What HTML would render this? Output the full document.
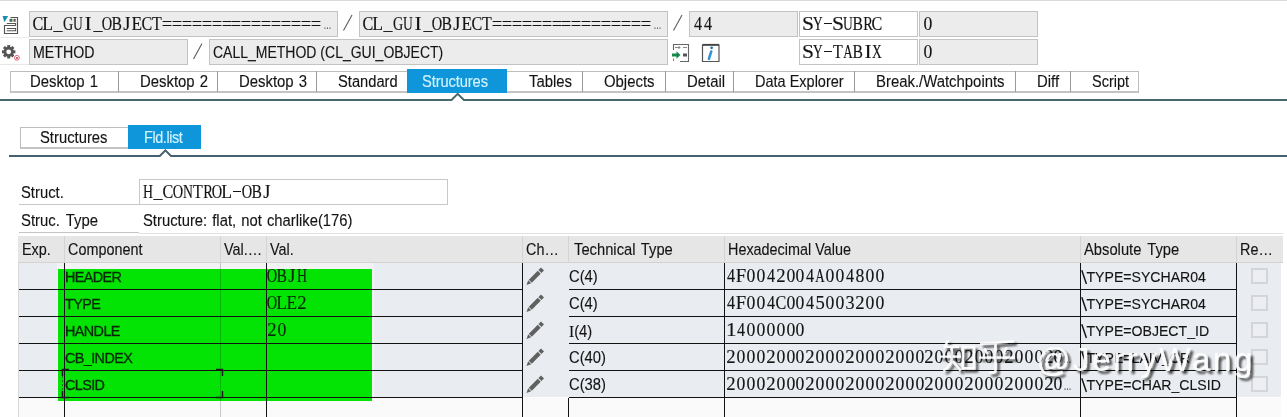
<!DOCTYPE html>
<html><head><meta charset="utf-8">
<style>
*{margin:0;padding:0;box-sizing:border-box}
html,body{width:1287px;height:417px;overflow:hidden;background:#fff}
body{position:relative;font-family:"Liberation Sans",sans-serif;color:#141414}
.a{position:absolute}
.t{position:absolute;white-space:nowrap;line-height:1;font-size:14.4px;-webkit-text-stroke:0.12px currentColor}
.m{position:absolute;white-space:nowrap;line-height:1;font-family:"Liberation Serif",serif;color:#141414;-webkit-text-stroke:0.15px currentColor}
.m i{font-style:normal;display:inline-flex;justify-content:center}
</style></head><body>
<div class="a" style="left:0px;top:0px;width:1287px;height:1px;background:#dadada"></div>
<svg class="a" style="left:0;top:0" width="24" height="66">
 <path d="M2.6 16 H8.2 L4.4 22.2 Z" fill="#1b8cb0"/>
 <path d="M10.5 17.5 H17.5 V33.5 H4.5 V25" fill="none" stroke="#555" stroke-width="1.15"/>
 <rect x="9.5" y="18.8" width="3" height="3" fill="#4b6b56"/>
 <rect x="13.5" y="18.8" width="2.2" height="3" fill="#5a5a5a"/>
 <path d="M6.8 23.5 H15.6 V25.5 H4.5 M6.8 28.5 H15.6 V30.8 H6.8" fill="none" stroke="#555" stroke-width="1.05"/>
 <g transform="translate(8.7 51.8)" fill="#555">
  <circle r="5.1"/>
  <rect x="-1.5" y="-6.7" width="3" height="13.4"/>
  <rect x="-1.5" y="-6.7" width="3" height="13.4" transform="rotate(45)"/>
  <rect x="-1.5" y="-6.7" width="3" height="13.4" transform="rotate(90)"/>
  <rect x="-1.5" y="-6.7" width="3" height="13.4" transform="rotate(135)"/>
  <circle r="2.4" fill="#fff"/>
 </g>
 <circle cx="16.9" cy="57.8" r="3.4" fill="#fff"/>
 <circle cx="16.9" cy="57.8" r="2.4" fill="#fff" stroke="#d65464" stroke-width="0.9"/>
 <circle cx="16.9" cy="58" r="1.1" fill="#c84858"/>
</svg>
<div class="a" style="left:29px;top:11px;width:309px;height:26px;background:#ececec;border:1px solid #c3c3c3"></div>
<div class="m" style="left:33px;top:14px;font-size:19.5px"><i style="width:9.93px;transform:translateX(-0.11px) scaleX(0.827)">C</i><i style="width:9.93px;transform:translateX(-0.28px) scaleX(0.904)">L</i><i style="width:9.93px;transform:translateX(-0.00px) scaleX(0.915)">_</i><i style="width:9.93px;transform:translateX(0.07px) scaleX(0.726)">G</i><i style="width:9.93px;transform:translateX(-0.00px) scaleX(0.694)">U</i><i style="width:9.93px;transform:translateX(0.01px) scaleX(1.097)">I</i><i style="width:9.93px;transform:translateX(-0.00px) scaleX(0.915)">_</i><i style="width:9.93px;transform:translateX(-0.00px) scaleX(0.737)">O</i><i style="width:9.93px;transform:translateX(-0.16px) scaleX(0.801)">B</i><i style="width:9.93px;transform:translateX(-0.00px) scaleX(0.945)">J</i><i style="width:9.93px;transform:translateX(-0.18px) scaleX(0.886)">E</i><i style="width:9.93px;transform:translateX(-0.11px) scaleX(0.827)">C</i><i style="width:9.93px;transform:translateX(0.01px) scaleX(0.819)">T</i><i style="width:9.93px;transform:translateX(0.01px) scaleX(0.948)">=</i><i style="width:9.93px;transform:translateX(0.01px) scaleX(0.948)">=</i><i style="width:9.93px;transform:translateX(0.01px) scaleX(0.948)">=</i><i style="width:9.93px;transform:translateX(0.01px) scaleX(0.948)">=</i><i style="width:9.93px;transform:translateX(0.01px) scaleX(0.948)">=</i><i style="width:9.93px;transform:translateX(0.01px) scaleX(0.948)">=</i><i style="width:9.93px;transform:translateX(0.01px) scaleX(0.948)">=</i><i style="width:9.93px;transform:translateX(0.01px) scaleX(0.948)">=</i><i style="width:9.93px;transform:translateX(0.01px) scaleX(0.948)">=</i><i style="width:9.93px;transform:translateX(0.01px) scaleX(0.948)">=</i><i style="width:9.93px;transform:translateX(0.01px) scaleX(0.948)">=</i><i style="width:9.93px;transform:translateX(0.01px) scaleX(0.948)">=</i><i style="width:9.93px;transform:translateX(0.01px) scaleX(0.948)">=</i><i style="width:9.93px;transform:translateX(0.01px) scaleX(0.948)">=</i><i style="width:9.93px;transform:translateX(0.01px) scaleX(0.948)">=</i><i style="width:9.93px;transform:translateX(0.01px) scaleX(0.948)">=</i></div>
<svg class="a" style="left:324px;top:27px" width="8" height="3"><rect x="0.5" y="0.5" width="1" height="1.3" fill="#444"/><rect x="3" y="0.5" width="1" height="1.3" fill="#444"/><rect x="5.5" y="0.5" width="1" height="1.3" fill="#444"/></svg>
<svg class="a" style="left:0;top:0" width="1287" height="70"><path d="M343.5 30.5 L352 15" stroke="#5c5c5c" stroke-width="1.1" fill="none"/></svg>
<div class="a" style="left:359px;top:11px;width:309px;height:26px;background:#ececec;border:1px solid #c3c3c3"></div>
<div class="m" style="left:363px;top:14px;font-size:19.5px"><i style="width:9.93px;transform:translateX(-0.11px) scaleX(0.827)">C</i><i style="width:9.93px;transform:translateX(-0.28px) scaleX(0.904)">L</i><i style="width:9.93px;transform:translateX(-0.00px) scaleX(0.915)">_</i><i style="width:9.93px;transform:translateX(0.07px) scaleX(0.726)">G</i><i style="width:9.93px;transform:translateX(-0.00px) scaleX(0.694)">U</i><i style="width:9.93px;transform:translateX(0.01px) scaleX(1.097)">I</i><i style="width:9.93px;transform:translateX(-0.00px) scaleX(0.915)">_</i><i style="width:9.93px;transform:translateX(-0.00px) scaleX(0.737)">O</i><i style="width:9.93px;transform:translateX(-0.16px) scaleX(0.801)">B</i><i style="width:9.93px;transform:translateX(-0.00px) scaleX(0.945)">J</i><i style="width:9.93px;transform:translateX(-0.18px) scaleX(0.886)">E</i><i style="width:9.93px;transform:translateX(-0.11px) scaleX(0.827)">C</i><i style="width:9.93px;transform:translateX(0.01px) scaleX(0.819)">T</i><i style="width:9.93px;transform:translateX(0.01px) scaleX(0.948)">=</i><i style="width:9.93px;transform:translateX(0.01px) scaleX(0.948)">=</i><i style="width:9.93px;transform:translateX(0.01px) scaleX(0.948)">=</i><i style="width:9.93px;transform:translateX(0.01px) scaleX(0.948)">=</i><i style="width:9.93px;transform:translateX(0.01px) scaleX(0.948)">=</i><i style="width:9.93px;transform:translateX(0.01px) scaleX(0.948)">=</i><i style="width:9.93px;transform:translateX(0.01px) scaleX(0.948)">=</i><i style="width:9.93px;transform:translateX(0.01px) scaleX(0.948)">=</i><i style="width:9.93px;transform:translateX(0.01px) scaleX(0.948)">=</i><i style="width:9.93px;transform:translateX(0.01px) scaleX(0.948)">=</i><i style="width:9.93px;transform:translateX(0.01px) scaleX(0.948)">=</i><i style="width:9.93px;transform:translateX(0.01px) scaleX(0.948)">=</i><i style="width:9.93px;transform:translateX(0.01px) scaleX(0.948)">=</i><i style="width:9.93px;transform:translateX(0.01px) scaleX(0.948)">=</i><i style="width:9.93px;transform:translateX(0.01px) scaleX(0.948)">=</i><i style="width:9.93px;transform:translateX(0.01px) scaleX(0.948)">=</i></div>
<svg class="a" style="left:654px;top:27px" width="8" height="3"><rect x="0.5" y="0.5" width="1" height="1.3" fill="#444"/><rect x="3" y="0.5" width="1" height="1.3" fill="#444"/><rect x="5.5" y="0.5" width="1" height="1.3" fill="#444"/></svg>
<svg class="a" style="left:0;top:0" width="1287" height="70"><path d="M673.5 30.5 L682 15" stroke="#5c5c5c" stroke-width="1.1" fill="none"/></svg>
<div class="a" style="left:689px;top:11px;width:109px;height:26px;background:#ececec;border:1px solid #c3c3c3"></div>
<div class="m" style="left:693px;top:14px;font-size:19.5px"><i style="width:9.93px;transform:translateX(0.03px) scaleX(0.827)">4</i><i style="width:9.93px;transform:translateX(0.03px) scaleX(0.827)">4</i></div>
<div class="a" style="left:799px;top:11px;width:119px;height:26px;background:#fff;border:1px solid #c3c3c3"></div>
<div class="m" style="left:803px;top:14px;font-size:19.5px"><i style="width:9.93px;transform:translateX(0.05px) scaleX(1.104)">S</i><i style="width:9.93px;transform:translateX(-0.10px) scaleX(0.688)">Y</i><i style="width:9.93px"> </i><b style="position:absolute;left:20.86px;top:8.80px;width:7.9px;height:1.15px;background:currentColor"></b><i style="width:9.93px;transform:translateX(0.05px) scaleX(1.104)">S</i><i style="width:9.93px;transform:translateX(-0.00px) scaleX(0.694)">U</i><i style="width:9.93px;transform:translateX(-0.16px) scaleX(0.801)">B</i><i style="width:9.93px;transform:translateX(0.20px) scaleX(0.741)">R</i><i style="width:9.93px;transform:translateX(-0.11px) scaleX(0.827)">C</i></div>
<div class="a" style="left:919px;top:11px;width:119px;height:26px;background:#ececec;border:1px solid #c3c3c3"></div>
<div class="m" style="left:923px;top:14px;font-size:19.5px"><i style="width:9.93px;transform:translateX(-0.00px) scaleX(0.907)">0</i></div>
<div class="a" style="left:0px;top:37px;width:29px;height:1px;background:#ececec"></div>
<div class="a" style="left:0px;top:64px;width:29px;height:1px;background:#e8e8e8"></div>
<div class="a" style="left:29px;top:39px;width:159px;height:26px;background:#ececec;border:1px solid #c3c3c3"></div>
<div class="t" style="left:33px;top:46px;font-size:14.2px;transform:scaleY(1.13);transform-origin:0 12.10px">METHOD</div>
<svg class="a" style="left:0;top:0" width="1287" height="70"><path d="M193.5 59 L202 43.5" stroke="#5c5c5c" stroke-width="1.1" fill="none"/></svg>
<div class="a" style="left:209px;top:39px;width:459px;height:26px;background:#ececec;border:1px solid #c3c3c3"></div>
<div class="t" style="left:213px;top:46px;font-size:14.0px;transform:scaleY(1.15);transform-origin:0 12.00px">CALL_METHOD (CL_GUI_OBJECT)</div>
<svg class="a" style="left:671px;top:43px" width="20" height="20" viewBox="0 0 20 20">
 <path d="M2.5 7 V1.5 H17.5 V18.5 H9" fill="none" stroke="#666" stroke-width="1.1"/>
 <path d="M4 4.5 H9 M7.5 3 L9 4.5 L7.5 6 M12 4.5 H16" fill="none" stroke="#888" stroke-width="1"/>
 <path d="M1 10.6 H5.5 V8.3 L9.5 12 L5.5 15.7 V13.4 H1 Z" fill="#17884a"/>
 <rect x="12" y="10.5" width="4" height="3" fill="#555"/>
 <path d="M2.5 15.5 V18" stroke="#c06080" stroke-width="1"/>
</svg>
<svg class="a" style="left:701px;top:43px" width="20" height="20" viewBox="0 0 20 20">
 <path d="M1.5 2 H18 V18.5 H1.5 Z" fill="#fff" stroke="#555" stroke-width="1.2"/>
 <path d="M1.5 1.8 H18" stroke="#444" stroke-width="1.8"/>
 <circle cx="10.6" cy="4.8" r="1.4" fill="#2a6fa0"/>
 <path d="M10.2 8.6 L7.9 15.8" stroke="#3394d4" stroke-width="2.6" stroke-linecap="round"/>
</svg>
<div class="a" style="left:799px;top:39px;width:119px;height:26px;background:#fff;border:1px solid #c3c3c3"></div>
<div class="m" style="left:803px;top:42px;font-size:19.5px"><i style="width:9.93px;transform:translateX(0.05px) scaleX(1.104)">S</i><i style="width:9.93px;transform:translateX(-0.10px) scaleX(0.688)">Y</i><i style="width:9.93px"> </i><b style="position:absolute;left:20.86px;top:8.80px;width:7.9px;height:1.15px;background:currentColor"></b><i style="width:9.93px;transform:translateX(0.01px) scaleX(0.819)">T</i><i style="width:9.93px;transform:translateX(0.02px) scaleX(0.669)">A</i><i style="width:9.93px;transform:translateX(-0.16px) scaleX(0.801)">B</i><i style="width:9.93px;transform:translateX(0.01px) scaleX(1.097)">I</i><i style="width:9.93px;transform:translateX(0.03px) scaleX(0.692)">X</i></div>
<div class="a" style="left:919px;top:39px;width:119px;height:26px;background:#ececec;border:1px solid #c3c3c3"></div>
<div class="m" style="left:923px;top:42px;font-size:19.5px"><i style="width:9.93px;transform:translateX(-0.00px) scaleX(0.907)">0</i></div>
<div class="a" style="left:10px;top:71px;width:1129px;height:1px;background:#bdbdbd"></div>
<div class="a" style="left:10px;top:91px;width:1129px;height:2px;background:#c4c4c4"></div>
<div class="a" style="left:10px;top:71px;width:1px;height:22px;background:#bdbdbd"></div>
<div class="a" style="left:1138px;top:71px;width:1px;height:22px;background:#bdbdbd"></div>
<div class="a" style="left:118px;top:71px;width:1px;height:21px;background:#9a9a9a"></div>
<div class="a" style="left:217px;top:71px;width:1px;height:21px;background:#9a9a9a"></div>
<div class="a" style="left:316px;top:71px;width:1px;height:21px;background:#9a9a9a"></div>
<div class="a" style="left:582px;top:71px;width:1px;height:21px;background:#9a9a9a"></div>
<div class="a" style="left:665px;top:71px;width:1px;height:21px;background:#9a9a9a"></div>
<div class="a" style="left:733px;top:71px;width:1px;height:21px;background:#9a9a9a"></div>
<div class="a" style="left:854px;top:71px;width:1px;height:21px;background:#9a9a9a"></div>
<div class="a" style="left:1015px;top:71px;width:1px;height:21px;background:#9a9a9a"></div>
<div class="a" style="left:1070px;top:71px;width:1px;height:21px;background:#9a9a9a"></div>
<div class="a" style="left:407px;top:69px;width:100px;height:24px;background:#0f96da"></div>
<div class="t" style="left:30px;top:75px;font-size:14.9px;transform:scaleY(1.05);transform-origin:0 12.45px;word-spacing:1px">Desktop 1</div>
<div class="t" style="left:140px;top:75px;font-size:14.9px;transform:scaleY(1.05);transform-origin:0 12.45px;word-spacing:1px">Desktop 2</div>
<div class="t" style="left:239px;top:75px;font-size:14.9px;transform:scaleY(1.05);transform-origin:0 12.45px;word-spacing:1px">Desktop 3</div>
<div class="t" style="left:529px;top:75px;font-size:14.9px;transform:scaleY(1.05);transform-origin:0 12.45px;word-spacing:1px">Tables</div>
<div class="t" style="left:604px;top:75px;font-size:14.9px;transform:scaleY(1.05);transform-origin:0 12.45px;word-spacing:1px">Objects</div>
<div class="t" style="left:687px;top:75px;font-size:14.9px;transform:scaleY(1.05);transform-origin:0 12.45px;word-spacing:1px">Detail</div>
<div class="t" style="left:876px;top:75px;font-size:14.9px;transform:scaleY(1.05);transform-origin:0 12.45px;word-spacing:1px">Break./Watchpoints</div>
<div class="t" style="left:1037px;top:75px;font-size:14.9px;transform:scaleY(1.05);transform-origin:0 12.45px;word-spacing:1px">Diff</div>
<div class="t" style="left:755px;top:75px;font-size:14.5px;transform:scaleY(1.08);transform-origin:0 12.25px">Data Explorer</div>
<div class="t" style="left:338px;top:75px;font-size:14.7px;transform:scaleY(1.06);transform-origin:0 12.35px">Standard</div>
<div class="t" style="left:1092px;top:75px;font-size:14.5px;transform:scaleY(1.08);transform-origin:0 12.25px">Script</div>
<div class="t" style="left:422px;top:75px;font-size:14.7px;color:#d2f4ff;letter-spacing:-0.1px;transform:scaleY(1.07);transform-origin:0 12.35px">Structures</div>
<svg class="a" style="left:0;top:90px" width="1287" height="12"><path d="M0 10 H451.5 L457.7 3.8 L463.9 10 H1287" fill="none" stroke="#486870" stroke-width="2"/></svg>
<div class="a" style="left:20px;top:127px;width:109px;height:1px;background:#bdbdbd"></div>
<div class="a" style="left:20px;top:147px;width:109px;height:2px;background:#c4c4c4"></div>
<div class="a" style="left:20px;top:127px;width:1px;height:22px;background:#bdbdbd"></div>
<div class="a" style="left:128px;top:125px;width:73px;height:24px;background:#0f96da"></div>
<div class="t" style="left:40px;top:131px;font-size:14.8px;transform:scaleY(1.06);transform-origin:0 12.40px">Structures</div>
<div class="t" style="left:144px;top:131px;font-size:14.4px;color:#d2f4ff;letter-spacing:-0.4px;transform:scaleY(1.09);transform-origin:0 12.20px">Fld.list</div>
<svg class="a" style="left:0;top:145px" width="1287" height="14"><path d="M9 11 H159.8 L165.4 5.4 L171 11 H1287" fill="none" stroke="#45606e" stroke-width="2"/></svg>
<div class="t" style="left:21px;top:186px;font-size:14.8px;transform:scaleY(1.06);transform-origin:0 12.40px">Struct.</div>
<div class="a" style="left:19px;top:204px;width:120px;height:1px;background:#c8c8c8"></div>
<div class="a" style="left:139px;top:179px;width:309px;height:26px;background:#fff;border:1px solid #c8c8c8"></div>
<div class="m" style="left:143px;top:182px;font-size:19.5px"><i style="width:9.93px;transform:translateX(-0.00px) scaleX(0.710)">H</i><i style="width:9.93px;transform:translateX(-0.00px) scaleX(0.915)">_</i><i style="width:9.93px;transform:translateX(-0.11px) scaleX(0.827)">C</i><i style="width:9.93px;transform:translateX(-0.00px) scaleX(0.737)">O</i><i style="width:9.93px;transform:translateX(0.04px) scaleX(0.704)">N</i><i style="width:9.93px;transform:translateX(0.01px) scaleX(0.819)">T</i><i style="width:9.93px;transform:translateX(0.20px) scaleX(0.741)">R</i><i style="width:9.93px;transform:translateX(-0.00px) scaleX(0.737)">O</i><i style="width:9.93px;transform:translateX(-0.28px) scaleX(0.904)">L</i><i style="width:9.93px"> </i><b style="position:absolute;left:90.37px;top:8.80px;width:7.9px;height:1.15px;background:currentColor"></b><i style="width:9.93px;transform:translateX(-0.00px) scaleX(0.737)">O</i><i style="width:9.93px;transform:translateX(-0.16px) scaleX(0.801)">B</i><i style="width:9.93px;transform:translateX(-0.00px) scaleX(0.945)">J</i></div>
<div class="t" style="left:21px;top:214px;font-size:14.9px;transform:scaleY(1.05);transform-origin:0 12.45px;word-spacing:2px">Struc. Type</div>
<div class="t" style="left:143px;top:214px;font-size:14.8px;transform:scaleY(1.06);transform-origin:0 12.40px;word-spacing:1px">Structure: flat, not charlike(176)</div>
<div class="a" style="left:19px;top:232px;width:120px;height:1px;background:#c4c4c4"></div>
<div class="a" style="left:139px;top:233px;width:1144px;height:1px;background:#e2e2e2"></div>
<div class="a" style="left:18px;top:236px;width:1265px;height:26px;background:#e6e6e6"></div>
<div class="a" style="left:18px;top:262px;width:1265px;height:1px;background:#d2d2d2"></div>
<div class="a" style="left:64px;top:236px;width:1px;height:26px;background:#d4d4d4"></div>
<div class="a" style="left:220px;top:236px;width:1px;height:26px;background:#d4d4d4"></div>
<div class="a" style="left:266px;top:236px;width:1px;height:26px;background:#d4d4d4"></div>
<div class="a" style="left:522px;top:236px;width:1px;height:26px;background:#d4d4d4"></div>
<div class="a" style="left:568px;top:236px;width:1px;height:26px;background:#d4d4d4"></div>
<div class="a" style="left:724px;top:236px;width:1px;height:26px;background:#d4d4d4"></div>
<div class="a" style="left:1080px;top:236px;width:1px;height:26px;background:#d4d4d4"></div>
<div class="a" style="left:1236px;top:236px;width:1px;height:26px;background:#d4d4d4"></div>
<div class="t" style="left:22px;top:243px;font-size:14.4px;transform:scaleY(1.09);transform-origin:0 12.20px;word-spacing:0px">Exp.</div>
<div class="t" style="left:68px;top:243px;font-size:14.4px;transform:scaleY(1.09);transform-origin:0 12.20px;word-spacing:0px">Component</div>
<div class="t" style="left:224px;top:243px;font-size:14.4px;transform:scaleY(1.09);transform-origin:0 12.20px;word-spacing:0px">Val.…</div>
<div class="t" style="left:270px;top:243px;font-size:14.4px;transform:scaleY(1.09);transform-origin:0 12.20px;word-spacing:0px">Val.</div>
<div class="t" style="left:526px;top:243px;font-size:14.4px;transform:scaleY(1.09);transform-origin:0 12.20px;word-spacing:0px">Ch…</div>
<div class="t" style="left:574px;top:243px;font-size:14.75px;transform:scaleY(1.0641355932203391);transform-origin:0 12.38px;word-spacing:1.5px">Technical Type</div>
<div class="t" style="left:728px;top:243px;font-size:14.4px;transform:scaleY(1.09);transform-origin:0 12.20px;word-spacing:0px">Hexadecimal Value</div>
<div class="t" style="left:1084px;top:243px;font-size:14.75px;transform:scaleY(1.0641355932203391);transform-origin:0 12.38px;word-spacing:2px">Absolute Type</div>
<div class="t" style="left:1240px;top:243px;font-size:14.4px;transform:scaleY(1.09);transform-origin:0 12.20px;word-spacing:0px">Re…</div>
<div class="a" style="left:18px;top:263px;width:1263px;height:134px;background:#e9ecf0"></div>
<div class="a" style="left:18px;top:398px;width:1263px;height:19px;background:#fafafa"></div>
<div class="a" style="left:57px;top:263px;width:317px;height:138px;background:#f3f2f5"></div>
<div class="a" style="left:58px;top:269px;width:314px;height:132px;background:#04e404"></div>
<div class="a" style="left:18px;top:262px;width:1px;height:155px;background:#d8d8d8"></div>
<div class="a" style="left:19px;top:289px;width:504px;height:1px;background:#121212"></div>
<div class="a" style="left:569px;top:289px;width:668px;height:1px;background:#121212"></div>
<div class="a" style="left:19px;top:316px;width:504px;height:1px;background:#121212"></div>
<div class="a" style="left:569px;top:316px;width:668px;height:1px;background:#121212"></div>
<div class="a" style="left:19px;top:343px;width:504px;height:1px;background:#121212"></div>
<div class="a" style="left:569px;top:343px;width:668px;height:1px;background:#121212"></div>
<div class="a" style="left:19px;top:370px;width:504px;height:1px;background:#121212"></div>
<div class="a" style="left:569px;top:370px;width:668px;height:1px;background:#121212"></div>
<div class="a" style="left:19px;top:397px;width:504px;height:1px;background:#121212"></div>
<div class="a" style="left:569px;top:397px;width:668px;height:1px;background:#121212"></div>
<div class="a" style="left:64px;top:263px;width:1px;height:154px;background:#121212"></div>
<div class="a" style="left:266px;top:263px;width:1px;height:154px;background:#121212"></div>
<div class="a" style="left:522px;top:263px;width:1px;height:154px;background:#121212"></div>
<div class="a" style="left:724px;top:263px;width:1px;height:154px;background:#121212"></div>
<div class="a" style="left:1080px;top:263px;width:1px;height:154px;background:#121212"></div>
<div class="a" style="left:1236px;top:263px;width:1px;height:154px;background:#121212"></div>
<div class="a" style="left:220px;top:263px;width:1px;height:154px;background:#cdcdcd;mix-blend-mode:multiply"></div>
<div class="a" style="left:568px;top:398px;width:1px;height:19px;background:#121212"></div>
<div class="t" style="left:65px;top:270px;font-size:14.4px;color:#062806;letter-spacing:-0.6px;transform:scaleY(1.02);transform-origin:0 12.20px;-webkit-text-stroke:0.3px currentColor">HEADER</div>
<div class="m" style="left:267px;top:266px;font-size:19.5px;color:#062806"><i style="width:9.93px;transform:translateX(-0.00px) scaleX(0.737)">O</i><i style="width:9.93px;transform:translateX(-0.16px) scaleX(0.801)">B</i><i style="width:9.93px;transform:translateX(-0.00px) scaleX(0.945)">J</i><i style="width:9.93px;transform:translateX(-0.00px) scaleX(0.710)">H</i></div>
<div class="t" style="left:569px;top:270px;font-size:14.8px;transform:scaleY(1.07);transform-origin:0 12.40px">C(4)</div>
<div class="m" style="left:726px;top:266px;font-size:19.5px"><i style="width:9.93px;transform:translateX(0.03px) scaleX(0.827)">4</i><i style="width:9.93px;transform:translateX(-0.07px) scaleX(0.960)">F</i><i style="width:9.93px;transform:translateX(-0.00px) scaleX(0.907)">0</i><i style="width:9.93px;transform:translateX(-0.00px) scaleX(0.907)">0</i><i style="width:9.93px;transform:translateX(0.03px) scaleX(0.827)">4</i><i style="width:9.93px;transform:translateX(-0.11px) scaleX(0.959)">2</i><i style="width:9.93px;transform:translateX(-0.00px) scaleX(0.907)">0</i><i style="width:9.93px;transform:translateX(-0.00px) scaleX(0.907)">0</i><i style="width:9.93px;transform:translateX(0.03px) scaleX(0.827)">4</i><i style="width:9.93px;transform:translateX(0.02px) scaleX(0.669)">A</i><i style="width:9.93px;transform:translateX(-0.00px) scaleX(0.907)">0</i><i style="width:9.93px;transform:translateX(-0.00px) scaleX(0.907)">0</i><i style="width:9.93px;transform:translateX(0.03px) scaleX(0.827)">4</i><i style="width:9.93px;transform:translateX(-0.00px) scaleX(0.907)">8</i><i style="width:9.93px;transform:translateX(-0.00px) scaleX(0.907)">0</i><i style="width:9.93px;transform:translateX(-0.00px) scaleX(0.907)">0</i></div>
<div class="t" style="left:1086.5px;top:270px;font-size:14.1px;transform:scaleY(1.1);transform-origin:0 12.05px">TYPE=SYCHAR04</div>
<svg class="a" style="left:1078px;top:268px" width="12" height="18"><path d="M3.8 2.2 L8.4 16" stroke="#141414" stroke-width="1.45"/></svg>
<svg class="a" style="left:520px;top:263.40px" width="30" height="28" viewBox="0 0 30 28"><g transform="translate(14.5 14) rotate(45)" fill="#606060"><rect x="-2.1" y="-11.3" width="4.2" height="3.6"/><rect x="-2.1" y="-6.7" width="4.2" height="12.6"/><path d="M-2.1 6.8 H2.1 L0 11.3 Z"/></g></svg>
<div class="a" style="left:1251px;top:268px;width:17px;height:16px;border:2px solid #d3d5d8;background:#eceef1"></div>
<div class="t" style="left:65px;top:297px;font-size:14.4px;color:#062806;letter-spacing:-0.6px;transform:scaleY(1.02);transform-origin:0 12.20px;-webkit-text-stroke:0.3px currentColor">TYPE</div>
<div class="m" style="left:267px;top:293px;font-size:19.5px;color:#062806"><i style="width:9.93px;transform:translateX(-0.00px) scaleX(0.737)">O</i><i style="width:9.93px;transform:translateX(-0.28px) scaleX(0.904)">L</i><i style="width:9.93px;transform:translateX(-0.18px) scaleX(0.886)">E</i><i style="width:9.93px;transform:translateX(-0.11px) scaleX(0.959)">2</i></div>
<div class="t" style="left:569px;top:297px;font-size:14.8px;transform:scaleY(1.07);transform-origin:0 12.40px">C(4)</div>
<div class="m" style="left:726px;top:293px;font-size:19.5px"><i style="width:9.93px;transform:translateX(0.03px) scaleX(0.827)">4</i><i style="width:9.93px;transform:translateX(-0.07px) scaleX(0.960)">F</i><i style="width:9.93px;transform:translateX(-0.00px) scaleX(0.907)">0</i><i style="width:9.93px;transform:translateX(-0.00px) scaleX(0.907)">0</i><i style="width:9.93px;transform:translateX(0.03px) scaleX(0.827)">4</i><i style="width:9.93px;transform:translateX(-0.11px) scaleX(0.827)">C</i><i style="width:9.93px;transform:translateX(-0.00px) scaleX(0.907)">0</i><i style="width:9.93px;transform:translateX(-0.00px) scaleX(0.907)">0</i><i style="width:9.93px;transform:translateX(0.03px) scaleX(0.827)">4</i><i style="width:9.93px;transform:translateX(0.18px) scaleX(0.955)">5</i><i style="width:9.93px;transform:translateX(-0.00px) scaleX(0.907)">0</i><i style="width:9.93px;transform:translateX(-0.00px) scaleX(0.907)">0</i><i style="width:9.93px;transform:translateX(0.08px) scaleX(0.931)">3</i><i style="width:9.93px;transform:translateX(-0.11px) scaleX(0.959)">2</i><i style="width:9.93px;transform:translateX(-0.00px) scaleX(0.907)">0</i><i style="width:9.93px;transform:translateX(-0.00px) scaleX(0.907)">0</i></div>
<div class="t" style="left:1086.5px;top:297px;font-size:14.1px;transform:scaleY(1.1);transform-origin:0 12.05px">TYPE=SYCHAR04</div>
<svg class="a" style="left:1078px;top:295px" width="12" height="18"><path d="M3.8 2.2 L8.4 16" stroke="#141414" stroke-width="1.45"/></svg>
<svg class="a" style="left:520px;top:290.40px" width="30" height="28" viewBox="0 0 30 28"><g transform="translate(14.5 14) rotate(45)" fill="#606060"><rect x="-2.1" y="-11.3" width="4.2" height="3.6"/><rect x="-2.1" y="-6.7" width="4.2" height="12.6"/><path d="M-2.1 6.8 H2.1 L0 11.3 Z"/></g></svg>
<div class="a" style="left:1251px;top:295px;width:17px;height:16px;border:2px solid #d3d5d8;background:#eceef1"></div>
<div class="t" style="left:65px;top:324px;font-size:14.4px;color:#062806;letter-spacing:-0.6px;transform:scaleY(1.02);transform-origin:0 12.20px;-webkit-text-stroke:0.3px currentColor">HANDLE</div>
<div class="m" style="left:267px;top:320px;font-size:19.5px;color:#062806"><i style="width:9.93px;transform:translateX(-0.11px) scaleX(0.959)">2</i><i style="width:9.93px;transform:translateX(-0.00px) scaleX(0.907)">0</i></div>
<div class="t" style="left:569px;top:324px;font-size:14.8px;transform:scaleY(1.07);transform-origin:0 12.40px"><span style="font-family:Liberation Serif;font-size:15.5px">I</span>(4)</div>
<div class="m" style="left:726px;top:320px;font-size:19.5px"><i style="width:9.93px;transform:translateX(0.30px) scaleX(1.092)">1</i><i style="width:9.93px;transform:translateX(0.03px) scaleX(0.827)">4</i><i style="width:9.93px;transform:translateX(-0.00px) scaleX(0.907)">0</i><i style="width:9.93px;transform:translateX(-0.00px) scaleX(0.907)">0</i><i style="width:9.93px;transform:translateX(-0.00px) scaleX(0.907)">0</i><i style="width:9.93px;transform:translateX(-0.00px) scaleX(0.907)">0</i><i style="width:9.93px;transform:translateX(-0.00px) scaleX(0.907)">0</i><i style="width:9.93px;transform:translateX(-0.00px) scaleX(0.907)">0</i></div>
<div class="t" style="left:1086.5px;top:324px;font-size:14.1px;transform:scaleY(1.1);transform-origin:0 12.05px">TYPE=OBJECT_ID</div>
<svg class="a" style="left:1078px;top:322px" width="12" height="18"><path d="M3.8 2.2 L8.4 16" stroke="#141414" stroke-width="1.45"/></svg>
<svg class="a" style="left:520px;top:317.40px" width="30" height="28" viewBox="0 0 30 28"><g transform="translate(14.5 14) rotate(45)" fill="#606060"><rect x="-2.1" y="-11.3" width="4.2" height="3.6"/><rect x="-2.1" y="-6.7" width="4.2" height="12.6"/><path d="M-2.1 6.8 H2.1 L0 11.3 Z"/></g></svg>
<div class="a" style="left:1251px;top:322px;width:17px;height:16px;border:2px solid #d3d5d8;background:#eceef1"></div>
<div class="t" style="left:65px;top:351px;font-size:14.4px;color:#062806;letter-spacing:-0.6px;transform:scaleY(1.02);transform-origin:0 12.20px;-webkit-text-stroke:0.3px currentColor">CB_INDEX</div>
<div class="t" style="left:569px;top:351px;font-size:14.8px;transform:scaleY(1.07);transform-origin:0 12.40px">C(40)</div>
<div class="m" style="left:726px;top:347px;font-size:19.5px"><i style="width:9.93px;transform:translateX(-0.11px) scaleX(0.959)">2</i><i style="width:9.93px;transform:translateX(-0.00px) scaleX(0.907)">0</i><i style="width:9.93px;transform:translateX(-0.00px) scaleX(0.907)">0</i><i style="width:9.93px;transform:translateX(-0.00px) scaleX(0.907)">0</i><i style="width:9.93px;transform:translateX(-0.11px) scaleX(0.959)">2</i><i style="width:9.93px;transform:translateX(-0.00px) scaleX(0.907)">0</i><i style="width:9.93px;transform:translateX(-0.00px) scaleX(0.907)">0</i><i style="width:9.93px;transform:translateX(-0.00px) scaleX(0.907)">0</i><i style="width:9.93px;transform:translateX(-0.11px) scaleX(0.959)">2</i><i style="width:9.93px;transform:translateX(-0.00px) scaleX(0.907)">0</i><i style="width:9.93px;transform:translateX(-0.00px) scaleX(0.907)">0</i><i style="width:9.93px;transform:translateX(-0.00px) scaleX(0.907)">0</i><i style="width:9.93px;transform:translateX(-0.11px) scaleX(0.959)">2</i><i style="width:9.93px;transform:translateX(-0.00px) scaleX(0.907)">0</i><i style="width:9.93px;transform:translateX(-0.00px) scaleX(0.907)">0</i><i style="width:9.93px;transform:translateX(-0.00px) scaleX(0.907)">0</i><i style="width:9.93px;transform:translateX(-0.11px) scaleX(0.959)">2</i><i style="width:9.93px;transform:translateX(-0.00px) scaleX(0.907)">0</i><i style="width:9.93px;transform:translateX(-0.00px) scaleX(0.907)">0</i><i style="width:9.93px;transform:translateX(-0.00px) scaleX(0.907)">0</i><i style="width:9.93px;transform:translateX(-0.11px) scaleX(0.959)">2</i><i style="width:9.93px;transform:translateX(-0.00px) scaleX(0.907)">0</i><i style="width:9.93px;transform:translateX(-0.00px) scaleX(0.907)">0</i><i style="width:9.93px;transform:translateX(-0.00px) scaleX(0.907)">0</i><i style="width:9.93px;transform:translateX(-0.11px) scaleX(0.959)">2</i><i style="width:9.93px;transform:translateX(-0.00px) scaleX(0.907)">0</i><i style="width:9.93px;transform:translateX(-0.00px) scaleX(0.907)">0</i><i style="width:9.93px;transform:translateX(-0.00px) scaleX(0.907)">0</i><i style="width:9.93px;transform:translateX(-0.11px) scaleX(0.959)">2</i><i style="width:9.93px;transform:translateX(-0.00px) scaleX(0.907)">0</i><i style="width:9.93px;transform:translateX(-0.00px) scaleX(0.907)">0</i><i style="width:9.93px;transform:translateX(-0.00px) scaleX(0.907)">0</i><i style="width:9.93px;transform:translateX(-0.11px) scaleX(0.959)">2</i><i style="width:9.93px;transform:translateX(-0.00px) scaleX(0.907)">0</i></div>
<svg class="a" style="left:1064px;top:361px" width="8" height="3"><rect x="0.5" y="0.5" width="1" height="1.3" fill="#333"/><rect x="3" y="0.5" width="1" height="1.3" fill="#333"/><rect x="5.5" y="0.5" width="1" height="1.3" fill="#333"/></svg>
<div class="t" style="left:1086.5px;top:351px;font-size:14.1px;transform:scaleY(1.1);transform-origin:0 12.05px">TYPE=LAIV_CR</div>
<svg class="a" style="left:1078px;top:349px" width="12" height="18"><path d="M3.8 2.2 L8.4 16" stroke="#141414" stroke-width="1.45"/></svg>
<svg class="a" style="left:520px;top:344.40px" width="30" height="28" viewBox="0 0 30 28"><g transform="translate(14.5 14) rotate(45)" fill="#606060"><rect x="-2.1" y="-11.3" width="4.2" height="3.6"/><rect x="-2.1" y="-6.7" width="4.2" height="12.6"/><path d="M-2.1 6.8 H2.1 L0 11.3 Z"/></g></svg>
<div class="a" style="left:1251px;top:349px;width:17px;height:16px;border:2px solid #d3d5d8;background:#eceef1"></div>
<div class="t" style="left:65px;top:378px;font-size:14.4px;color:#062806;letter-spacing:-0.6px;transform:scaleY(1.02);transform-origin:0 12.20px;-webkit-text-stroke:0.3px currentColor">CLSID</div>
<div class="t" style="left:569px;top:378px;font-size:14.8px;transform:scaleY(1.07);transform-origin:0 12.40px">C(38)</div>
<div class="m" style="left:726px;top:374px;font-size:19.5px"><i style="width:9.93px;transform:translateX(-0.11px) scaleX(0.959)">2</i><i style="width:9.93px;transform:translateX(-0.00px) scaleX(0.907)">0</i><i style="width:9.93px;transform:translateX(-0.00px) scaleX(0.907)">0</i><i style="width:9.93px;transform:translateX(-0.00px) scaleX(0.907)">0</i><i style="width:9.93px;transform:translateX(-0.11px) scaleX(0.959)">2</i><i style="width:9.93px;transform:translateX(-0.00px) scaleX(0.907)">0</i><i style="width:9.93px;transform:translateX(-0.00px) scaleX(0.907)">0</i><i style="width:9.93px;transform:translateX(-0.00px) scaleX(0.907)">0</i><i style="width:9.93px;transform:translateX(-0.11px) scaleX(0.959)">2</i><i style="width:9.93px;transform:translateX(-0.00px) scaleX(0.907)">0</i><i style="width:9.93px;transform:translateX(-0.00px) scaleX(0.907)">0</i><i style="width:9.93px;transform:translateX(-0.00px) scaleX(0.907)">0</i><i style="width:9.93px;transform:translateX(-0.11px) scaleX(0.959)">2</i><i style="width:9.93px;transform:translateX(-0.00px) scaleX(0.907)">0</i><i style="width:9.93px;transform:translateX(-0.00px) scaleX(0.907)">0</i><i style="width:9.93px;transform:translateX(-0.00px) scaleX(0.907)">0</i><i style="width:9.93px;transform:translateX(-0.11px) scaleX(0.959)">2</i><i style="width:9.93px;transform:translateX(-0.00px) scaleX(0.907)">0</i><i style="width:9.93px;transform:translateX(-0.00px) scaleX(0.907)">0</i><i style="width:9.93px;transform:translateX(-0.00px) scaleX(0.907)">0</i><i style="width:9.93px;transform:translateX(-0.11px) scaleX(0.959)">2</i><i style="width:9.93px;transform:translateX(-0.00px) scaleX(0.907)">0</i><i style="width:9.93px;transform:translateX(-0.00px) scaleX(0.907)">0</i><i style="width:9.93px;transform:translateX(-0.00px) scaleX(0.907)">0</i><i style="width:9.93px;transform:translateX(-0.11px) scaleX(0.959)">2</i><i style="width:9.93px;transform:translateX(-0.00px) scaleX(0.907)">0</i><i style="width:9.93px;transform:translateX(-0.00px) scaleX(0.907)">0</i><i style="width:9.93px;transform:translateX(-0.00px) scaleX(0.907)">0</i><i style="width:9.93px;transform:translateX(-0.11px) scaleX(0.959)">2</i><i style="width:9.93px;transform:translateX(-0.00px) scaleX(0.907)">0</i><i style="width:9.93px;transform:translateX(-0.00px) scaleX(0.907)">0</i><i style="width:9.93px;transform:translateX(-0.00px) scaleX(0.907)">0</i><i style="width:9.93px;transform:translateX(-0.11px) scaleX(0.959)">2</i><i style="width:9.93px;transform:translateX(-0.00px) scaleX(0.907)">0</i></div>
<svg class="a" style="left:1064px;top:388px" width="8" height="3"><rect x="0.5" y="0.5" width="1" height="1.3" fill="#333"/><rect x="3" y="0.5" width="1" height="1.3" fill="#333"/><rect x="5.5" y="0.5" width="1" height="1.3" fill="#333"/></svg>
<div class="t" style="left:1086.5px;top:378px;font-size:14.1px;transform:scaleY(1.1);transform-origin:0 12.05px">TYPE=CHAR_CLSID</div>
<svg class="a" style="left:1078px;top:376px" width="12" height="18"><path d="M3.8 2.2 L8.4 16" stroke="#141414" stroke-width="1.45"/></svg>
<svg class="a" style="left:520px;top:371.40px" width="30" height="28" viewBox="0 0 30 28"><g transform="translate(14.5 14) rotate(45)" fill="#606060"><rect x="-2.1" y="-11.3" width="4.2" height="3.6"/><rect x="-2.1" y="-6.7" width="4.2" height="12.6"/><path d="M-2.1 6.8 H2.1 L0 11.3 Z"/></g></svg>
<div class="a" style="left:1251px;top:376px;width:17px;height:16px;border:2px solid #d3d5d8;background:#eceef1"></div>
<svg class="a" style="left:0;top:0" width="300" height="417"><path d="M62.5 376 V369.5 H69 M216 369.5 H222.5 V376 M62.5 391 V397.5 H69 M216 397.5 H222.5 V391" fill="none" stroke="#1a1a1a" stroke-width="1.5"/><path d="M62.5 376 V391" stroke="#1a1a1a" stroke-width="1" stroke-dasharray="2 2" opacity="0.5"/></svg>
<svg class="a" style="left:930px;top:330px" width="345" height="62" viewBox="0 0 345 62">
<defs><filter id="sh" x="-10%" y="-30%" width="125%" height="160%"><feGaussianBlur in="SourceAlpha" stdDeviation="1.2"/><feOffset dx="2.8" dy="2.6"/><feComponentTransfer><feFuncA type="linear" slope="0.75"/></feComponentTransfer><feMerge><feMergeNode/><feMergeNode in="SourceGraphic"/></feMerge></filter></defs>
<g filter="url(#sh)">
<g fill="none" stroke="#fff" stroke-width="2.4" stroke-linecap="butt" opacity="0.9">
<path d="M18 10.2 L14.3 17.6 M14.3 16.8 H29 M10 26.6 H30.7 M21.7 16.8 V29 Q20.5 36 13.3 40.8 M22.8 31.3 L30.7 40.8"/>
<path d="M32.8 17 H44 V38.2 H32.8 Z"/>
<path d="M50 13.8 Q66 12.8 84 11.2 M54.4 18.7 L57.6 24 M76.6 17.6 L73.4 24 M49 27.6 H85 M65.5 13.4 V40.5 Q65.5 43 58.6 42.4"/>
</g>
<text x="106.5" y="40.8" font-family="Liberation Sans" font-size="33.5" textLength="216" lengthAdjust="spacing" fill="#fff" fill-opacity="0.92">@JerryWang</text>
</g>
</svg>
</body></html>
